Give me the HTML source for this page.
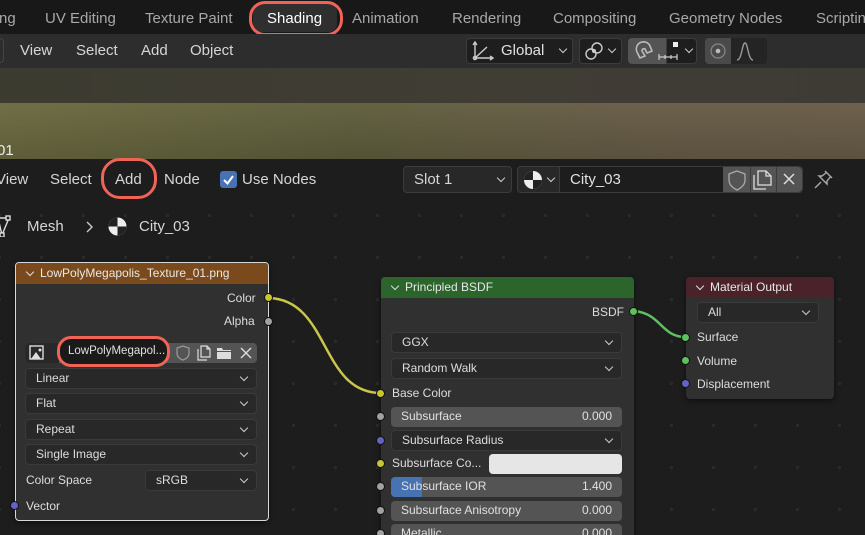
<!DOCTYPE html>
<html><head><meta charset="utf-8"><style>
*{box-sizing:border-box;margin:0;padding:0}
html,body{width:865px;height:535px;overflow:hidden}
body{background:#1d1d1d;font-family:"Liberation Sans","DejaVu Sans",sans-serif;color:#ddd;position:relative}
.a{position:absolute;white-space:nowrap}
.tab{position:absolute;top:10px;font-size:15px;color:#a8a8a8}
.m{position:absolute;font-size:15px;color:#d6d6d6}
.cv{position:absolute;width:6px;height:6px;border-right:1.4px solid #ccc;border-bottom:1.4px solid #ccc;transform:rotate(45deg)}
.box{position:absolute;background:#282828;border:1px solid #3a3a3a;border-radius:4px;font-size:12px;color:#ddd;padding-left:10px;line-height:18px}
.box:after{content:"";position:absolute;right:9px;top:5px;width:5px;height:5px;border-right:1.3px solid #ccc;border-bottom:1.3px solid #ccc;transform:rotate(45deg)}
.sl{position:absolute;background:#545454;border-radius:4px;font-size:12px;color:#e0e0e0;line-height:19px;padding-left:8px;overflow:hidden}
.sl span{position:absolute;right:10px;top:0}
.lbl{position:absolute;font-size:12px;color:#ddd}
.sk{position:absolute;width:9px;height:9px;border-radius:50%;border:1px solid #111}
.node{position:absolute;background:#303030;border-radius:4px;box-shadow:0 2px 6px rgba(0,0,0,.5);overflow:hidden}
.hd{height:21px;font-size:12px;color:#e8e8e8;line-height:21px;padding-left:24px;position:relative}
.hd:before{content:"";position:absolute;left:11px;top:6px;width:5px;height:5px;border-right:1.3px solid #ddd;border-bottom:1.3px solid #ddd;transform:rotate(45deg)}
</style></head><body>
<div class="a" style="left:0;top:0;width:865px;height:34px;background:#181818"></div>
<div class="tab" style="left:-1px">ng</div>
<div class="tab" style="left:45px">UV Editing</div>
<div class="tab" style="left:145px">Texture Paint</div>
<div class="a" style="left:253px;top:4px;width:84px;height:28px;background:#2f2f2f;border-radius:8px"></div>
<div class="a" style="left:249px;top:1px;width:94px;height:35px;border:3px solid #f06458;border-radius:16px"></div>
<div class="tab" style="left:267px;color:#fff">Shading</div>
<div class="tab" style="left:352px">Animation</div>
<div class="tab" style="left:452px">Rendering</div>
<div class="tab" style="left:553px">Compositing</div>
<div class="tab" style="left:669px">Geometry Nodes</div>
<div class="tab" style="left:816px">Scriptin</div>
<div class="a" style="left:0;top:34px;width:865px;height:34px;background:#2d2d2d"></div>
<div class="a" style="left:-5px;top:38px;width:9px;height:25px;border:1px solid #444;border-radius:4px"></div>
<div class="m" style="left:20px;top:42px">View</div>
<div class="m" style="left:76px;top:42px">Select</div>
<div class="m" style="left:141px;top:42px">Add</div>
<div class="m" style="left:190px;top:42px">Object</div>
<div class="a" style="left:466px;top:38px;width:107px;height:26px;background:#1e1e1e;border:1px solid #3c3c3c;border-radius:4px"></div>
<svg class="a" style="left:472px;top:40px" width="24" height="22" viewBox="0 0 24 22" fill="none" stroke="#ccc" stroke-width="1.4"><path d="M3 3V18H20M3 18L15 7M1 5L3 2L5 5M18 16L21 18L18 20"/><circle cx="3" cy="18" r="1.6"/></svg>
<div class="m" style="left:501px;top:42px;color:#e0e0e0">Global</div>
<div class="cv" style="left:560px;top:46px"></div>
<div class="a" style="left:579px;top:38px;width:43px;height:26px;background:#1e1e1e;border:1px solid #3c3c3c;border-radius:4px"></div>
<svg class="a" style="left:584px;top:41px" width="22" height="20" fill="none" stroke="#ccc" stroke-width="1.4"><circle cx="7" cy="13" r="5"/><circle cx="13" cy="7" r="5"/><circle cx="10" cy="10" r="1.3" fill="#ccc"/></svg>
<div class="cv" style="left:609px;top:46px"></div>
<div class="a" style="left:628px;top:38px;width:38px;height:26px;background:#545454;border-radius:4px 0 0 4px"></div>
<div class="a" style="left:666px;top:38px;width:31px;height:26px;background:#1e1e1e;border:1px solid #3c3c3c;border-radius:0 4px 4px 0"></div>
<svg class="a" style="left:634px;top:41px" width="22" height="20" fill="none" stroke="#bbb" stroke-width="1.6"><path d="M6 17L3 11A7 7 0 0 1 16 5L18 10L13 12L11 8A2 2 0 0 0 8 10L11 15Z"/></svg>
<svg class="a" style="left:657px;top:40px" width="22" height="22" fill="none" stroke="#ccc" stroke-width="1.2"><path d="M2 14V20M2 17H20M8 15V19M14 15V19M20 14V20"/><rect x="16" y="2" width="5" height="5" fill="#eee" stroke="none"/></svg>
<div class="cv" style="left:686px;top:46px"></div>
<div class="a" style="left:705px;top:38px;width:26px;height:26px;background:#4a4a4a;border-radius:4px 0 0 4px"></div>
<div class="a" style="left:731px;top:38px;width:36px;height:26px;background:#242424;border-radius:0 4px 4px 0"></div>
<svg class="a" style="left:708px;top:41px" width="20" height="20" fill="none" stroke="#888" stroke-width="1.2"><circle cx="10" cy="10" r="7"/><circle cx="10" cy="10" r="2.3" fill="#bbb" stroke="none"/></svg>
<svg class="a" style="left:735px;top:40px" width="22" height="22" fill="none" stroke="#999" stroke-width="1.4"><path d="M2 20C7 20 7 3 10 3S13 20 18 20"/></svg>
<div class="a" style="left:0;top:68px;width:865px;height:35px;background:linear-gradient(90deg,#3c3b30,#403d35 60%,#3e3b35)"></div>
<div class="a" style="left:0;top:103px;width:865px;height:56px;background:linear-gradient(90deg,#6c6a40,#5f5e3c 40%,#665c46 70%,#695c48)"></div>
<div class="a" style="left:0;top:103px;width:865px;height:56px;background:linear-gradient(180deg,rgba(255,255,255,.03),rgba(0,0,0,.12))"></div>
<div class="a" style="left:-3px;top:142px;font-size:15px;color:#eee">01</div>
<div class="a" style="left:0;top:159px;width:865px;height:42px;background:#1d1d1d"></div>
<div class="m" style="left:-4px;top:171px">View</div>
<div class="m" style="left:50px;top:171px">Select</div>
<div class="a" style="left:101px;top:158px;width:56px;height:41px;border:3px solid #f06458;border-radius:19px"></div>
<div class="m" style="left:115px;top:171px">Add</div>
<div class="m" style="left:164px;top:171px">Node</div>
<div class="a" style="left:220px;top:171px;width:17px;height:17px;background:#4772b3;border-radius:3px"></div>
<svg class="a" style="left:220px;top:171px" width="17" height="17" fill="none" stroke="#fff" stroke-width="2"><path d="M4 9L7.5 12.5L13 5"/></svg>
<div class="m" style="left:242px;top:171px">Use Nodes</div>
<div class="a" style="left:403px;top:166px;width:109px;height:27px;background:#282828;border:1px solid #3c3c3c;border-radius:4px"></div>
<div class="m" style="left:414px;top:171px">Slot 1</div>
<div class="cv" style="left:498px;top:175px"></div>
<div class="a" style="left:517px;top:166px;width:286px;height:27px;background:#282828;border:1px solid #3c3c3c;border-radius:4px"></div>
<div class="a" style="left:559px;top:167px;width:164px;height:25px;background:#1d1d1d;border-left:1px solid #3c3c3c"></div>
<svg class="a" style="left:522px;top:169px" width="22" height="22"><circle cx="11" cy="11" r="9" fill="#eee"/><path d="M11 2A9 9 0 0 0 2 11H11Z" fill="#222"/><path d="M11 11H20A9 9 0 0 1 11 20Z" fill="#222"/></svg>
<div class="cv" style="left:548px;top:175px"></div>
<div class="m" style="left:570px;top:171px;color:#e0e0e0">City_03</div>
<div class="a" style="left:723px;top:167px;width:79px;height:25px;background:#545454;border-radius:0 4px 4px 0"></div>
<svg class="a" style="left:725px;top:169px" width="24" height="22" fill="none" stroke="#aaa" stroke-width="1.3"><path d="M12 2L20 5V11C20 16 16 19 12 21C8 19 4 16 4 11V5Z"/></svg>
<svg class="a" style="left:751px;top:169px" width="24" height="22" fill="none" stroke="#ddd" stroke-width="1.3"><path d="M3 6V20H15M7 2H15L20 7V16H7ZM15 2V7H20"/></svg>
<div class="a" style="left:750px;top:166px;width:1px;height:26px;background:#3c3c3c"></div>
<div class="a" style="left:776px;top:166px;width:1px;height:26px;background:#3c3c3c"></div>
<svg class="a" style="left:781px;top:171px" width="16" height="16" stroke="#ddd" stroke-width="1.5"><path d="M3 3L13 13M13 3L3 13"/></svg>
<svg class="a" style="left:811px;top:168px" width="24" height="22" fill="none" stroke="#aaa" stroke-width="1.4"><path d="M4 20L10 14M14 3L21 10M16 4L11 8L8 8L16 16L16 13L20 8"/></svg>
<svg class="a" style="left:0;top:200px" width="865" height="335"><defs><pattern id="g" x="-2" y="14" width="42" height="42" patternUnits="userSpaceOnUse"><rect width="3" height="3" fill="#2a2a2a"/></pattern></defs><rect width="865" height="335" fill="url(#g)"/></svg>
<svg class="a" style="left:-4px;top:215px" width="22" height="22" fill="none" stroke="#ddd" stroke-width="1.4"><path d="M2 3H13L6 20Z"/><rect x="10" y="1" width="4" height="4" fill="#1d1d1d"/><rect x="4" y="18" width="4" height="4" fill="#1d1d1d"/></svg>
<div class="m" style="left:27px;top:218px">Mesh</div>
<svg class="a" style="left:85px;top:221px" width="10" height="12" fill="none" stroke="#ccc" stroke-width="1.4"><path d="M2 1L7 6L2 11"/></svg>
<svg class="a" style="left:107px;top:216px" width="21" height="21"><circle cx="10.5" cy="10.5" r="9" fill="#eee"/><path d="M10.5 1.5A9 9 0 0 0 1.5 10.5H10.5Z" fill="#222"/><path d="M10.5 10.5H19.5A9 9 0 0 1 10.5 19.5Z" fill="#222"/></svg>
<div class="m" style="left:139px;top:218px">City_03</div>
<svg class="a" style="left:0;top:0" width="865" height="535" fill="none"><path d="M269 298C330 300 320 393 381 393" stroke="#c9c64a" stroke-width="2.5"/><path d="M633 311C662 313 660 337 686 337" stroke="#5ec05e" stroke-width="2.5"/></svg>
<div class="node" style="left:15px;top:262px;width:254px;height:259px;border:1px solid #d8d8d8">
<div class="hd" style="background:#7a4a1d">LowPolyMegapolis_Texture_01.png</div></div>
<div class="lbl" style="left:227px;top:291px">Color</div>
<div class="lbl" style="left:224px;top:314px">Alpha</div>
<div class="a" style="left:25px;top:343px;width:232px;height:20px;background:#545454;border-radius:4px"></div>
<div class="a" style="left:25px;top:343px;width:34px;height:20px;background:#282828;border-radius:4px 0 0 4px"></div>
<svg class="a" style="left:29px;top:345px" width="16" height="16"><rect x="1" y="1" width="13" height="13" fill="none" stroke="#ddd" stroke-width="1.4"/><path d="M2 14L7 7L12 14Z" fill="#ddd"/><circle cx="11" cy="5" r="1.5" fill="#ddd"/></svg>
<div class="a" style="left:57px;top:336px;width:113px;height:31px;background:#1a1a1a;border:3px solid #f06458;border-radius:14px;font-size:11.5px;color:#e0e0e0;padding-left:8px;line-height:25px">LowPolyMegapol...</div>
<svg class="a" style="left:174px;top:344px" width="18" height="18" fill="none" stroke="#999" stroke-width="1.2"><path d="M9 2L15 4V9C15 13 12 15 9 16C6 15 3 13 3 9V4Z"/></svg>
<svg class="a" style="left:195px;top:344px" width="18" height="18" fill="none" stroke="#ddd" stroke-width="1.2"><path d="M3 5V16H12M6 2H12L15 5V13H6ZM12 2V5H15"/></svg>
<svg class="a" style="left:215px;top:345px" width="18" height="16"><path d="M2 3H7L8 5H16V14H2Z" fill="#ddd"/><rect x="2" y="6" width="14" height="1" fill="#545454"/></svg>
<svg class="a" style="left:240px;top:347px" width="12" height="12" stroke="#ddd" stroke-width="1.4"><path d="M1 1L11 11M11 1L1 11"/></svg>
<div class="box" style="left:25px;top:368px;width:232px;height:21px">Linear</div>
<div class="box" style="left:25px;top:393px;width:232px;height:21px">Flat</div>
<div class="box" style="left:25px;top:419px;width:232px;height:21px">Repeat</div>
<div class="box" style="left:25px;top:444px;width:232px;height:21px">Single Image</div>
<div class="lbl" style="left:26px;top:473px">Color Space</div>
<div class="box" style="left:145px;top:470px;width:112px;height:21px">sRGB</div>
<div class="lbl" style="left:26px;top:499px">Vector</div>
<div class="sk" style="left:264px;top:293px;background:#c7c729"></div>
<div class="sk" style="left:264px;top:317px;background:#a1a1a1"></div>
<div class="sk" style="left:10px;top:501px;background:#6363c7"></div>
<div class="node" style="left:381px;top:277px;width:253px;height:270px">
<div class="hd" style="background:#2b652b">Principled BSDF</div></div>
<div class="lbl" style="left:592px;top:305px">BSDF</div>
<div class="box" style="left:391px;top:332px;width:231px;height:21px">GGX</div>
<div class="box" style="left:391px;top:358px;width:231px;height:21px">Random Walk</div>
<div class="lbl" style="left:392px;top:386px">Base Color</div>
<div class="sl" style="left:391px;top:407px;width:231px;height:20px;padding-left:10px">Subsurface<span>0.000</span></div>
<div class="box" style="left:391px;top:430px;width:231px;height:21px">Subsurface Radius</div>
<div class="lbl" style="left:392px;top:456px">Subsurface Co...</div>
<div class="a" style="left:489px;top:454px;width:133px;height:20px;background:#e6e6e6;border-radius:4px"></div>
<div class="sl" style="left:391px;top:477px;width:231px;height:20px;padding-left:10px"><i style="position:absolute;left:0;top:0;width:31px;height:20px;background:#4772b3"></i><b style="position:relative;font-weight:normal">Subsurface IOR</b><span>1.400</span></div>
<div class="sl" style="left:391px;top:501px;width:231px;height:20px;padding-left:10px">Subsurface Anisotropy<span>0.000</span></div>
<div class="sl" style="left:391px;top:524px;width:231px;height:20px;padding-left:10px">Metallic<span>0.000</span></div>
<div class="sk" style="left:629px;top:307px;background:#5ec05e"></div>
<div class="sk" style="left:376px;top:389px;background:#c7c729"></div>
<div class="sk" style="left:376px;top:412px;background:#a1a1a1"></div>
<div class="sk" style="left:376px;top:436px;background:#6363c7"></div>
<div class="sk" style="left:376px;top:459px;background:#c7c729"></div>
<div class="sk" style="left:376px;top:482px;background:#a1a1a1"></div>
<div class="sk" style="left:376px;top:506px;background:#a1a1a1"></div>
<div class="sk" style="left:376px;top:529px;background:#a1a1a1"></div>
<div class="node" style="left:686px;top:277px;width:148px;height:122px">
<div class="hd" style="background:#4a2229">Material Output</div></div>
<div class="box" style="left:697px;top:302px;width:122px;height:21px">All</div>
<div class="lbl" style="left:697px;top:330px">Surface</div>
<div class="lbl" style="left:697px;top:354px">Volume</div>
<div class="lbl" style="left:697px;top:377px">Displacement</div>
<div class="sk" style="left:681px;top:333px;background:#5ec05e"></div>
<div class="sk" style="left:681px;top:356px;background:#5ec05e"></div>
<div class="sk" style="left:681px;top:379px;background:#6363c7"></div>
</body></html>
